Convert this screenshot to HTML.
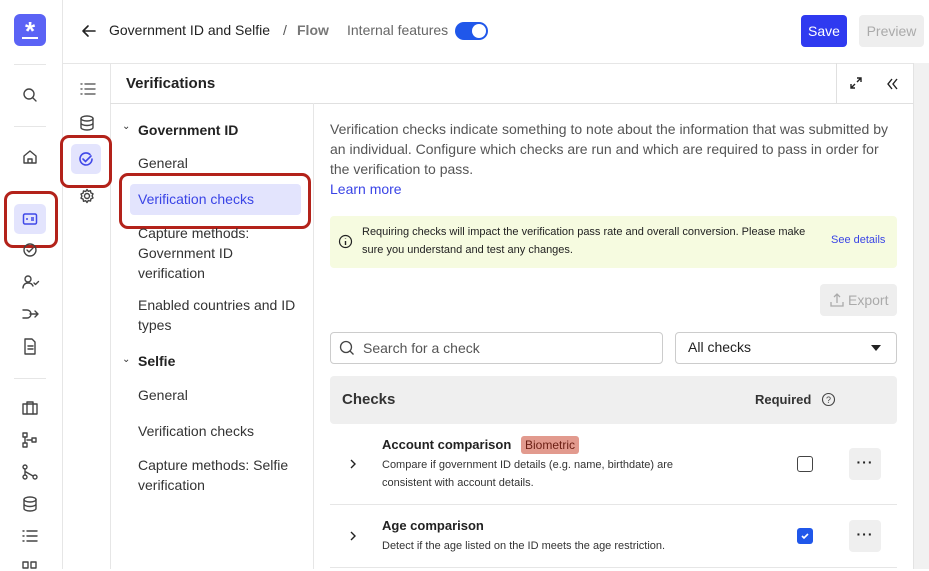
<!DOCTYPE html>
<html><head><style>
*{box-sizing:border-box;margin:0;padding:0}
body{width:929px;height:569px;overflow:hidden;background:#fff;font-family:"Liberation Sans",sans-serif;color:#222;position:relative}
.abs{position:absolute}
svg{display:block}
.ic{stroke:#444;fill:none;stroke-width:1.4;stroke-linecap:round;stroke-linejoin:round}
.nav{font-size:14px;color:#333;position:absolute;left:138px;line-height:20px}
.red{position:absolute;border:3px solid #b3221a;border-radius:9px}
</style></head><body>
<!-- left rail -->
<div class="abs" style="left:62px;top:0;width:1px;height:569px;background:#e6e6e6"></div>
<div class="abs" style="left:14px;top:14px;width:32px;height:32px;background:#5b63f5;border-radius:6px;color:#fff;font-size:26px;font-weight:bold;text-align:center;line-height:34px">*</div>
<div class="abs" style="left:22px;top:37px;width:16px;height:2px;background:#fff"></div>
<div class="abs" style="left:14px;top:64px;width:32px;height:1px;background:#e6e6e6"></div>
<div class="abs" style="left:14px;top:126px;width:32px;height:1px;background:#e6e6e6"></div>
<div class="abs" style="left:14px;top:378px;width:32px;height:1px;background:#e6e6e6"></div>
<svg class="abs" style="left:22px;top:87px" width="16" height="16"><circle class="ic" cx="7" cy="7" r="5"/><path class="ic" d="M11 11l3 3"/></svg>
<svg class="abs" style="left:22px;top:149px" width="16" height="16"><path class="ic" d="M2 7l6-5 6 5v7H2z M6 14v-4h4v4"/></svg>
<div class="abs" style="left:14px;top:204px;width:32px;height:30px;background:#e3e4fd;border-radius:5px"></div>
<svg class="abs" style="left:22px;top:211px" width="16" height="16"><rect x="1.5" y="3" width="13" height="10" rx="1.5" fill="none" stroke="#4048e8" stroke-width="1.5"/><path d="M4 8h2M9 7h3M9 9h3" stroke="#4048e8" stroke-width="1.5"/></svg>
<div class="red" style="left:4px;top:191px;width:54px;height:57px"></div>
<svg class="abs" style="left:22px;top:242px" width="16" height="16"><circle class="ic" cx="8" cy="8" r="6"/><path class="ic" d="M5 8l2 2 4-4"/></svg>
<svg class="abs" style="left:22px;top:274px" width="18" height="16"><circle class="ic" cx="6" cy="5" r="3"/><path class="ic" d="M1 14c0-3 2-5 5-5s4 1 5 3M12 9l1.5 1.5 3-3"/></svg>
<svg class="abs" style="left:22px;top:306px" width="18" height="16"><path class="ic" d="M1 4h4a4 4 0 010 8H1M8 8h8M13 5l3 3-3 3"/></svg>
<svg class="abs" style="left:22px;top:338px" width="16" height="18"><path class="ic" d="M3 1h7l3 3v12H3z M6 8h5M6 11h5"/></svg>
<svg class="abs" style="left:22px;top:400px" width="16" height="16"><rect class="ic" x="1" y="4" width="14" height="10"/><path class="ic" d="M5 4V2h6v2M5 4v10M11 4v10"/></svg>
<svg class="abs" style="left:22px;top:432px" width="16" height="16"><rect class="ic" x="1" y="1" width="4" height="4"/><rect class="ic" x="1" y="11" width="4" height="4"/><rect class="ic" x="10" y="6" width="4" height="4"/><path class="ic" d="M3 5v6M5 8h5"/></svg>
<svg class="abs" style="left:22px;top:464px" width="16" height="16"><circle class="ic" cx="3" cy="3" r="2"/><circle class="ic" cx="3" cy="13" r="2"/><circle class="ic" cx="13" cy="13" r="2"/><path class="ic" d="M3 5v6M4 8l7 4"/></svg>
<svg class="abs" style="left:22px;top:496px" width="16" height="16"><ellipse class="ic" cx="8" cy="3.5" rx="6" ry="2.5"/><path class="ic" d="M2 3.5v9c0 1.4 2.7 2.5 6 2.5s6-1.1 6-2.5v-9M2 8c0 1.4 2.7 2.5 6 2.5s6-1.1 6-2.5"/></svg>
<svg class="abs" style="left:22px;top:529px" width="16" height="14"><path class="ic" d="M1 2h1M5 2h10M1 7h1M5 7h10M1 12h1M5 12h10"/></svg>
<svg class="abs" style="left:22px;top:561px" width="16" height="10"><rect class="ic" x="1" y="1" width="5" height="6"/><rect class="ic" x="9" y="1" width="5" height="6"/></svg>

<!-- top bar -->
<svg class="abs" style="left:81px;top:23px" width="16" height="16"><path d="M14 8H2M7 3L2 8l5 5" fill="none" stroke="#222" stroke-width="1.6" stroke-linecap="round" stroke-linejoin="round"/></svg>
<div class="abs" style="left:109px;top:22px;font-size:14px;color:#222">Government ID and Selfie</div>
<div class="abs" style="left:283px;top:22px;font-size:14px;color:#555">/</div>
<div class="abs" style="left:297px;top:22px;font-size:14px;color:#777;font-weight:bold">Flow</div>
<div class="abs" style="left:347px;top:22px;font-size:14px;color:#666">Internal features</div>
<div class="abs" style="left:455px;top:22px;width:33px;height:18px;background:#2057ea;border-radius:9px"></div>
<div class="abs" style="left:472px;top:24px;width:14px;height:14px;background:#fff;border-radius:50%"></div>
<div class="abs" style="left:801px;top:15px;width:46px;height:32px;background:#2f3af0;border-radius:4px;color:#fff;font-size:14px;text-align:center;line-height:32px">Save</div>
<div class="abs" style="left:859px;top:15px;width:65px;height:32px;background:#eee;border-radius:4px;color:#aaa;font-size:14px;text-align:center;line-height:32px">Preview</div>
<div class="abs" style="left:63px;top:63px;width:866px;height:1px;background:#e6e6e6"></div>

<!-- second rail -->
<div class="abs" style="left:110px;top:63px;width:1px;height:506px;background:#e6e6e6"></div>
<svg class="abs" style="left:80px;top:82px" width="16" height="14"><path class="ic" d="M1 2h1M5 2h10M1 7h1M5 7h10M1 12h1M5 12h10" style="stroke:#666"/></svg>
<svg class="abs" style="left:79px;top:115px" width="16" height="16"><ellipse class="ic" cx="8" cy="3.5" rx="6" ry="2.5"/><path class="ic" d="M2 3.5v9c0 1.4 2.7 2.5 6 2.5s6-1.1 6-2.5v-9M2 8c0 1.4 2.7 2.5 6 2.5s6-1.1 6-2.5"/></svg>
<div class="abs" style="left:71px;top:144px;width:30px;height:30px;background:#e3e4fd;border-radius:5px"></div>
<svg class="abs" style="left:78px;top:151px" width="16" height="16"><path d="M14 8a6 6 0 11-2-4.5" fill="none" stroke="#4048e8" stroke-width="1.6" stroke-linecap="round"/><path d="M5 8l2.5 2.5L13 5" fill="none" stroke="#4048e8" stroke-width="1.6" stroke-linecap="round"/></svg>
<div class="red" style="left:60px;top:135px;width:52px;height:53px"></div>
<svg class="abs" style="left:79px;top:188px" width="16" height="16"><circle class="ic" cx="8" cy="8" r="2.5"/><path class="ic" d="M8 1.5l1.3 1.8 2.2-.6.4 2.2 2.1.9-.9 2.1.9 2.1-2.1.9-.4 2.2-2.2-.6L8 14.5l-1.3-1.8-2.2.6-.4-2.2-2.1-.9.9-2.1-.9-2.1 2.1-.9.4-2.2 2.2.6z"/></svg>

<!-- panel header -->
<div class="abs" style="left:126px;top:75px;font-size:15px;font-weight:bold;color:#222">Verifications</div>
<div class="abs" style="left:110px;top:103px;width:803px;height:1px;background:#e0e0e0"></div>
<div class="abs" style="left:836px;top:63px;width:1px;height:40px;background:#e0e0e0"></div>
<svg class="abs" style="left:849px;top:76px" width="14" height="14"><path d="M8 2h4v4M12 2L8 6M6 12H2V8M2 12l4-4" fill="none" stroke="#222" stroke-width="1.4"/></svg>
<svg class="abs" style="left:886px;top:78px" width="14" height="12"><path d="M6 1L2 6l4 5M11 1L7 6l4 5" fill="none" stroke="#222" stroke-width="1.4"/></svg>
<div class="abs" style="left:913px;top:63px;width:16px;height:506px;background:#f1f1f1;border-left:1px solid #e3e3e3"></div>

<!-- nav -->
<div class="abs" style="left:313px;top:103px;width:1px;height:466px;background:#e6e6e6"></div>
<div class="abs" style="left:122px;top:121px;font-size:10px;color:#333">⌄</div>
<div class="nav" style="top:120px;font-weight:bold;color:#222">Government ID</div>
<div class="nav" style="top:153px">General</div>
<div class="abs" style="left:130px;top:184px;width:171px;height:31px;background:#e3e4fd;border-radius:4px"></div>
<div class="nav" style="top:189px;color:#3a44e6">Verification checks</div>
<div class="red" style="left:119px;top:173px;width:192px;height:56px"></div>
<div class="nav" style="top:223px;width:150px">Capture methods: Government ID verification</div>
<div class="nav" style="top:295px;width:170px">Enabled countries and ID types</div>
<div class="abs" style="left:122px;top:354px;font-size:10px;color:#333">⌄</div>
<div class="nav" style="top:351px;font-weight:bold;color:#222">Selfie</div>
<div class="nav" style="top:385px">General</div>
<div class="nav" style="top:421px">Verification checks</div>
<div class="nav" style="top:455px;width:170px">Capture methods: Selfie verification</div>

<!-- content -->
<div class="abs" style="left:330px;top:119px;width:566px;font-size:14px;line-height:20px;color:#555">Verification checks indicate something to note about the information that was submitted by an individual. Configure which checks are run and which are required to pass in order for the verification to pass.<br><span style="color:#3a44e6">Learn more</span></div>
<div class="abs" style="left:330px;top:216px;width:567px;height:52px;background:#f6fbe0;border-radius:4px"></div>
<svg class="abs" style="left:338px;top:234px" width="15" height="15"><circle cx="7.5" cy="7.5" r="6" fill="none" stroke="#222" stroke-width="1.2"/><path d="M7.5 7v4M7.5 4.5v.5" stroke="#222" stroke-width="1.4"/></svg>
<div class="abs" style="left:362px;top:223px;width:460px;font-size:11px;line-height:18px;color:#222">Requiring checks will impact the verification pass rate and overall conversion. Please make sure you understand and test any changes.</div>
<div class="abs" style="left:831px;top:234px;font-size:11px;color:#3a44e6">See details</div>
<div class="abs" style="left:820px;top:284px;width:77px;height:32px;background:#eee;border-radius:4px;color:#aaa;font-size:14px;line-height:32px;padding-left:28px">Export</div>
<svg class="abs" style="left:829px;top:292px" width="16" height="16"><path d="M2 10v4h12v-4M8 11V2M5 5l3-3 3 3" fill="none" stroke="#aaa" stroke-width="1.3"/></svg>
<div class="abs" style="left:330px;top:332px;width:333px;height:32px;border:1px solid #ccc;border-radius:4px"></div>
<svg class="abs" style="left:339px;top:340px" width="16" height="16"><circle cx="7" cy="7" r="5.5" fill="none" stroke="#444" stroke-width="1.3"/><path d="M11 11l3.5 3.5" stroke="#444" stroke-width="1.3"/></svg>
<div class="abs" style="left:363px;top:340px;font-size:14px;color:#555">Search for a check</div>
<div class="abs" style="left:675px;top:332px;width:222px;height:32px;border:1px solid #ccc;border-radius:4px"></div>
<div class="abs" style="left:688px;top:339px;font-size:14px;color:#222">All checks</div>
<div class="abs" style="left:871px;top:345px;width:0;height:0;border-left:5px solid transparent;border-right:5px solid transparent;border-top:6px solid #222"></div>

<div class="abs" style="left:330px;top:376px;width:567px;height:48px;background:#efefef;border-radius:4px"></div>
<div class="abs" style="left:342px;top:391px;font-size:15px;font-weight:bold;color:#333">Checks</div>
<div class="abs" style="left:755px;top:392px;font-size:13px;font-weight:bold;color:#333">Required</div>
<svg class="abs" style="left:821px;top:392px" width="15" height="15"><circle cx="7.5" cy="7.5" r="6" fill="none" stroke="#444" stroke-width="1.1"/><text x="7.5" y="11" font-size="9" text-anchor="middle" fill="#444" font-family="Liberation Sans">?</text></svg>

<svg class="abs" style="left:349px;top:458px" width="8" height="12"><path d="M2 2l4 4-4 4" fill="none" stroke="#222" stroke-width="1.4"/></svg>
<div class="abs" style="left:382px;top:437px;font-size:13px;font-weight:bold;color:#222">Account comparison</div>
<div class="abs" style="left:521px;top:436px;height:18px;padding:0 4px;background:#e29a8e;border-radius:3px;font-size:12px;line-height:18px;color:#6a1d12">Biometric</div>
<div class="abs" style="left:382px;top:456px;width:330px;font-size:11px;line-height:18px;color:#333">Compare if government ID details (e.g. name, birthdate) are consistent with account details.</div>
<div class="abs" style="left:797px;top:456px;width:16px;height:16px;border:1.3px solid #444;border-radius:3px"></div>
<div class="abs" style="left:849px;top:448px;width:32px;height:32px;background:#efefef;border-radius:4px;text-align:center;font-size:14px;line-height:28px;font-weight:bold;letter-spacing:1px">···</div>
<div class="abs" style="left:330px;top:504px;width:567px;height:1px;background:#e6e6e6"></div>

<svg class="abs" style="left:349px;top:530px" width="8" height="12"><path d="M2 2l4 4-4 4" fill="none" stroke="#222" stroke-width="1.4"/></svg>
<div class="abs" style="left:382px;top:518px;font-size:13px;font-weight:bold;color:#222">Age comparison</div>
<div class="abs" style="left:382px;top:537px;font-size:11px;line-height:18px;color:#333">Detect if the age listed on the ID meets the age restriction.</div>
<div class="abs" style="left:797px;top:528px;width:16px;height:16px;background:#2057ea;border-radius:3px"></div>
<svg class="abs" style="left:797px;top:528px" width="16" height="16"><path d="M5 8l2 2 4-4" fill="none" stroke="#fff" stroke-width="1.6"/></svg>
<div class="abs" style="left:849px;top:520px;width:32px;height:32px;background:#efefef;border-radius:4px;text-align:center;font-size:14px;line-height:28px;font-weight:bold;letter-spacing:1px">···</div>
<div class="abs" style="left:330px;top:567px;width:567px;height:1px;background:#e6e6e6"></div>
</body></html>
